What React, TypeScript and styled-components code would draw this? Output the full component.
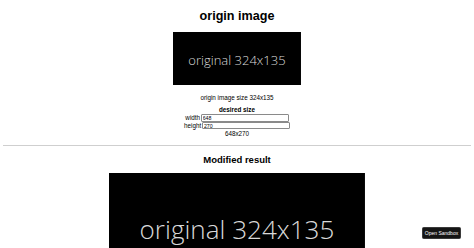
import React, { useState } from "react";
import styled, { createGlobalStyle } from "styled-components";

const ORIGIN = { width: 324, height: 135 };
// the screenshot is the page at ~0.395 scale
const SCALE = 0.395;

const GlobalStyle = createGlobalStyle`
  html, body {
    margin: 0;
    padding: 0;
    background: #ffffff;
  }
  body {
    font-family: "Liberation Sans", Arial, sans-serif;
    color: #000000;
  }
`;

const SampleImage = ({ width, height }: { width: number; height: number }) => (
  <ImageBox width={width} height={height}>
    <svg
      width={width}
      height={height}
      viewBox={`0 0 ${ORIGIN.width} ${ORIGIN.height}`}
      preserveAspectRatio="none"
    >
      <rect width={ORIGIN.width} height={ORIGIN.height} fill="#000" />
      <text
        x={ORIGIN.width / 2}
        y={84}
        textAnchor="middle"
        fill="#d9d9d9"
        fontFamily="'Open Sans', 'Noto Sans', sans-serif"
        fontSize={33}
        fontWeight={300}
      >
        original {ORIGIN.width}x{ORIGIN.height}
      </text>
    </svg>
  </ImageBox>
);

const App = () => {
  const [desired, setDesired] = useState({ width: "648", height: "270" });

  const w = Number(desired.width) || 0;
  const h = Number(desired.height) || 0;

  return (
    <Page>
      <GlobalStyle />
      <Title>origin image</Title>
      <SampleImage width={ORIGIN.width * SCALE} height={ORIGIN.height * SCALE} />
      <Text>
        origin image size {ORIGIN.width}x{ORIGIN.height}
      </Text>
      <SubTitle>desired size</SubTitle>
      <FieldRow>
        <Label htmlFor="w">width</Label>
        <Input
          id="w"
          value={desired.width}
          onChange={(e) => setDesired({ ...desired, width: e.target.value })}
        />
      </FieldRow>
      <FieldRow>
        <Label htmlFor="h">height</Label>
        <Input
          id="h"
          value={desired.height}
          onChange={(e) => setDesired({ ...desired, height: e.target.value })}
        />
      </FieldRow>
      <SizeText>
        {w}x{h}
      </SizeText>
      <Divider />
      <ResultTitle>Modified result</ResultTitle>
      <SampleImage width={w * SCALE} height={h * SCALE} />
      <SandboxButton>Open Sandbox</SandboxButton>
    </Page>
  );
};

export default App;

const Page = styled.div`
  display: flex;
  flex-direction: column;
  align-items: center;
  padding: 3px;
  height: 248px;
  box-sizing: border-box;
  overflow: hidden;
`;

const Title = styled.h1`
  margin: 6px 0 8px;
  font-size: 12.6px;
  line-height: 15px;
  font-weight: bold;
`;

const ImageBox = styled.div<{ width: number; height: number }>`
  flex: none;
  width: ${(p) => p.width}px;
  height: ${(p) => p.height}px;
  svg {
    display: block;
  }
`;

const Text = styled.p`
  margin: 8.7px 0 0;
  font-size: 6.3px;
  line-height: 7.5px;
`;

const SubTitle = styled.h4`
  margin: 4.5px 0 0.7px;
  font-size: 6.3px;
  line-height: 7.5px;
  font-weight: bold;
`;

const FieldRow = styled.div`
  display: flex;
  align-items: center;
  height: 8.6px;
`;

const Label = styled.label`
  font-size: 6.3px;
  line-height: 7.5px;
`;

const Input = styled.input`
  box-sizing: border-box;
  width: 88px;
  height: 7.6px;
  margin: 0 0 0 0.6px;
  padding: 0 1px;
  border: 0.6px solid #8a8a8a;
  border-radius: 1px;
  font-family: "Liberation Sans", Arial, sans-serif;
  font-size: 5.2px;
  color: #000;
  outline: none;
`;

const SizeText = styled.div`
  margin-top: 0.6px;
  font-size: 6.3px;
  line-height: 7.5px;
`;

const Divider = styled.hr`
  align-self: stretch;
  margin: 7.4px 0 0;
  border: none;
  border-top: 1px solid #cfcfcf;
`;

const ResultTitle = styled.h2`
  margin: 8px 0 8px;
  font-size: 9.5px;
  line-height: 11px;
  font-weight: bold;
`;

const SandboxButton = styled.button`
  position: fixed;
  right: 13px;
  bottom: 9px;
  width: 39px;
  height: 12px;
  padding: 0;
  background: #151515;
  color: #ffffff;
  border: 0.5px solid #3a3a3a;
  border-radius: 1.5px;
  font-family: "Liberation Sans", Arial, sans-serif;
  font-size: 5px;
  cursor: pointer;
`;
